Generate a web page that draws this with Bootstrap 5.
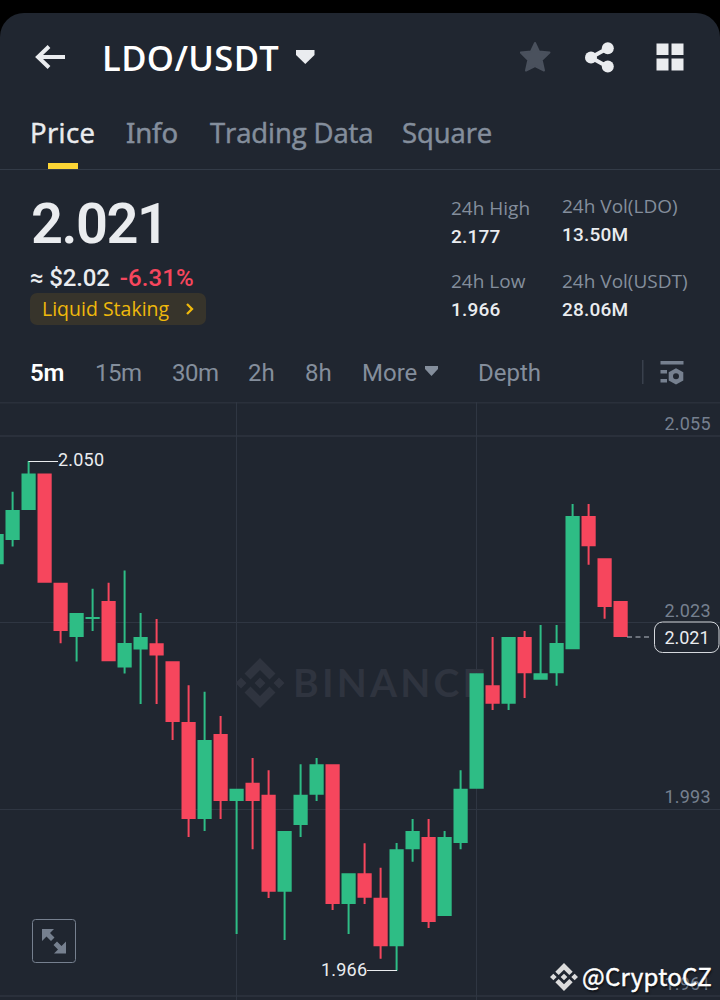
<!DOCTYPE html>
<html lang="en">
<head>
<meta charset="utf-8">
<meta name="viewport" content="width=device-width, initial-scale=1">
<title>LDO/USDT</title>
<link href="https://cdn.jsdelivr.net/npm/bootstrap@5.3.0/dist/css/bootstrap.min.css" rel="stylesheet">
<style>
body{background:#000;font-family:"Open Sans","Noto Sans",sans-serif;color:#eaecef;height:1000px;overflow:hidden}
.app{background:#202630;border-radius:24px 24px 0 0;margin-top:13px;height:987px;position:relative}
.topbar{height:88px;padding:0 35px}
.pair{font-size:34.5px;font-weight:600;color:#fff;line-height:44px;letter-spacing:.4px;margin-left:36px;padding-top:2px;width:194px;white-space:nowrap}
.tabs{display:grid;grid-template-columns:96px 84px 192px 1fr;height:69px;padding-left:30px;border-bottom:1px solid #333b47;font-size:27.5px;font-weight:400;-webkit-text-stroke:.5px;line-height:40px;padding-top:12px;color:#848e9c;white-space:nowrap;letter-spacing:-.1px}
.tabs a,.frames a{color:inherit;text-decoration:none}
.tabs .on{color:#eaecef;letter-spacing:.4px}
.bar{width:30px;height:6px;background:#fcd535;margin:10px 0 0 18px}
.num{font-family:Roboto,sans-serif}
.quote{height:172px;padding-left:30px}
.price{font-size:56px;font-weight:600;line-height:60px;margin:24px 0 0 1px;height:60px;letter-spacing:-1.5px}
.sub{font-size:24px;line-height:28px;margin-top:10px;font-weight:500;white-space:nowrap;letter-spacing:-.15px}
.down{color:#f6465d;letter-spacing:.1px}
.tagpill{background:#37342b;color:#f0b90b;border-radius:7px;width:176px;height:32px;font-size:19.5px;line-height:32px;padding:0 12px;margin-top:1px;white-space:nowrap}
.stats{width:269px;display:grid;grid-template-columns:111px 1fr;padding-top:24px}
.stats dl{margin:0 0 16px;height:56px;white-space:nowrap}
.stats dt{font-size:19px;font-weight:400;line-height:28px;color:#848e9c}
.stats dd{margin:1px 0 0;font-size:19px;font-weight:500;line-height:28px;letter-spacing:.2px}
.stats .lift{margin-top:-2px}
.frames{display:grid;grid-template-columns:65px 77px 76px 57px 57px 116px 164px 1fr;height:60px;padding-left:30px;font-size:24px;line-height:62px;color:#848e9c;white-space:nowrap}
.frames .on{color:#fff;font-weight:600;letter-spacing:-.3px}
.chart{display:block;width:720px;height:598px}
.chart text{font-family:Roboto,sans-serif;font-size:18px}
.credit{position:absolute;right:8px;bottom:6px;color:#fff;font:400 24px/36px "Noto Sans CJK SC",sans-serif;-webkit-text-stroke:.45px;letter-spacing:.25px;text-shadow:1px 2px 2px #0009}
.credit span{margin-top:-3px}
</style>
</head>
<body>
<main class="app">
  <header class="topbar d-flex align-items-center">
    <svg width="31" height="26" viewBox="0 0 31 26" fill="none" stroke="#eaecef" stroke-width="4"><path d="M14 2.500 3 13l11 10.500M3 13h27"/></svg>
    <div class="pair">LDO/USDT</div>
    <svg width="19" height="15" viewBox="0 0 19 15" fill="#eaecef"><path d="M0 0h18.500v5L9.300 14 0 5z"/></svg>
    <svg class="ms-auto" width="31" height="32" viewBox="0 0 31 32" fill="#4a515d" stroke="#4a515d" stroke-width="2" stroke-linejoin="round"><path d="m15 2 4 8.500 10.500 1-7.800 7.500 2.300 10.500-9-4.500-9 4.500 2.300-10.500L.8 11.500l10.200-1z"/></svg>
    <svg style="margin-left:34px" width="30" height="31" viewBox="0 0 30 31" fill="#eaecef"><path d="M6 15.500 23 6M6 15.500 23 25" stroke="#eaecef" stroke-width="4"/><circle cx="6" cy="15.500" r="6"/><circle cx="22.800" cy="6.200" r="6"/><circle cx="22.800" cy="24.500" r="6"/></svg>
    <svg style="margin-left:41px" width="29" height="28" viewBox="0 0 29 28" fill="#eaecef"><path d="M.5.500h12v11.500h-12zM15.500.500h12v11.500h-12zM.5 15.500h12v12h-12zM15.500 15.500h12v12h-12z"/></svg>
  </header>
  <nav class="tabs">
    <a class="on" href="#">Price<div class="bar"></div></a><a href="#" style="font-family:'Noto Sans'">Info</a><a href="#">Trading Data</a><a href="#">Square</a>
  </nav>
  <section class="quote d-flex justify-content-between">
    <div>
      <div class="price num">2.021</div>
      <div class="sub num">≈ $2.02 <span class="down ms-1">-6.31%</span></div>
      <div class="tagpill d-flex align-items-center justify-content-between">Liquid Staking <svg width="8" height="12" viewBox="0 0 8 12" fill="none" stroke="#f0b90b" stroke-width="2.300"><path d="m1 1 5 5-5 5"/></svg></div>
    </div>
    <div class="stats">
      <dl><dt>24h High</dt><dd class="num">2.177</dd></dl><dl class="lift"><dt>24h Vol(LDO)</dt><dd class="num">13.50M</dd></dl>
      <dl class="lift"><dt>24h Low</dt><dd class="num">1.966</dd></dl><dl class="lift"><dt>24h Vol(USDT)</dt><dd class="num">28.06M</dd></dl>
    </div>
  </section>
  <nav class="frames num">
    <a class="on" href="#">5m</a><a href="#" style="letter-spacing:-.5px">15m</a><a href="#" style="letter-spacing:-.5px">30m</a><a href="#">2h</a><a href="#">8h</a>
    <a href="#">More <svg width="13" height="10" viewBox="0 0 13 10" fill="#848e9c" style="margin:-8px 0 0 2px"><path d="M0 0h13v3L6.500 10 0 3z"/></svg></a>
    <a href="#">Depth</a>
    <div class="d-flex align-items-center"><svg width="42" height="26" viewBox="0 0 42 26" fill="#76808f" style="margin-top:-2px"><path fill="#39404c" d="M0 1h1.500v24H0z"/><path d="M18.500 2h23v3.500h-23zM18.500 11H25v3.500h-6.500zM18.500 20H25v3.500h-6.500z"/><path fill-rule="evenodd" d="m34 9.300 7.300 4v8.200l-7.300 4-7.300-4v-8.200zm0 5a3 3 0 1 0 0 6 3 3 0 0 0 0-6z"/></svg></div>
  </nav>
  <svg class="chart" viewBox="0 402 720 598">
    <g stroke="#2f3642"><path d="M0 402.500H720M0 436H720M0 996H720" stroke="#2a303b" stroke-width="2"/><path d="M0 622.500H720M0 809.500H720M236.500 402V1000M476.500 402V1000"/></g>
    <g fill="#2f343f"><path d="m260 658 15.500 15.500-6 6L260 670l-9.500 9.500-6-6zM260 708l15.500-15.500-6-6L260 696l-9.500-9.500-6 6zM260 677.500l5.500 5.500-5.500 5.500-5.500-5.500zM241 677.500l5.500 5.500-5.500 5.500-5.500-5.500zM279 677.500l5.500 5.500-5.500 5.500-5.500-5.500z"/>
    <text x="293" y="697" textLength="192" style="font:700 39px Lato,sans-serif">BINANCE</text></g>
    <g id="candles"></g>
    <path d="M28.500 461.500H58M367 970.500h30" stroke="#eaecef"/>
    <g fill="#eaecef"><text x="58" y="466" textLength="46">2.050</text><text x="321" y="976" textLength="46">1.966</text></g>
    <g fill="#76808f"><text x="664.500" y="430" textLength="46">2.055</text><text x="664.500" y="617" textLength="46">2.023</text><text x="664.500" y="803" textLength="46">1.993</text><text x="664.500" y="990" textLength="46">1.961</text></g>
    <path d="M627 637h22" stroke="#b7bdc6" stroke-dasharray="5 3.500"/>
    <rect x="654.500" y="622" width="64.500" height="30.500" rx="8" fill="#202630" stroke="#d5d8dd"/>
    <text x="664.500" y="644" textLength="45" fill="#eaecef">2.021</text>
    <rect x="32.500" y="919.500" width="43" height="43" rx="3" fill="none" stroke="#76808f"/>
    <path fill="#76808f" d="M42 929h12l-4 4 4.500 4.500-3.500 3.500-4.500-4.500L42 941zM66 953.500H54l4-4-4.500-4.500 3.500-3.500 4.500 4.500 4.500-4.500z"/>
  </svg>
  <div class="credit d-flex align-items-center"><svg width="28" height="28" viewBox="0 0 50 50" fill="#dcdcdc" style="margin:-1px 4px 0 0"><path d="m25 0 15.500 15.500-6 6L25 12l-9.500 9.500-6-6zM25 50l15.500-15.500-6-6L25 38l-9.500-9.500-6 6zM25 19l6 6-6 6-6-6zM6 19l6 6-6 6-6-6zM44 19l6 6-6 6-6-6z"/></svg><span>@CryptoCZ</span></div>
</main>
<script src="https://cdn.jsdelivr.net/npm/bootstrap@5.3.0/dist/js/bootstrap.bundle.min.js"></script>
<script>
// Each candle: direction, wick top, body top, body bottom, wick bottom
const data = `g 534 534 564.3 564.3
g 491.7 510 540 546.5
g 461 473.5 510 510
r 473.5 473.5 582.7 582.7
r 582.7 582.7 631 643.3
g 613 613 637 661.5
g 588.7 617 619 631
r 582.7 601 661.3 661.3
g 570.5 643 667.5 673.5
g 613 637 649.5 704
r 619 643.3 655.5 704
r 661.3 661.3 722 740
r 685.3 722 819 837
g 691.7 740 819 831
r 716 734 801 819
g 788.7 788.7 801 934
r 758 782.7 801 849.3
r 770.3 794.7 891.7 898
g 831 831 891.7 940
g 764.3 794.7 825 837
g 758 764.3 794.7 801
r 764.3 764.3 904 910
g 873.3 873.3 904 934
r 843.3 873.3 897.7 904
r 867.7 897.7 946.3 958.7
g 843 849.3 946.3 970.7
g 819 831 849.3 861.7
r 819 837 922 928
g 831 837 916 916
g 770.3 788.7 843 849.3
g 673.3 673.3 788.7 788.7
r 637 685.3 703.7 710
g 637 637 703.7 710
r 631 637 673.3 698
g 625 673.3 679.7 679.7
g 625 643 673.3 685.7
g 504 516 649.3 649.3
r 504 516 546.3 564.7
r 558.3 558.3 607 618.7
r 601 601 637 637`.split("\n").map(l => l.trim().split(" "));
document.getElementById("candles").innerHTML = data.map(([c, t, a, b, w], i) => {
  const x = 16 * i - 3.4, f = c === "g" ? "#2ebd85" : "#f6465d";
  return `<path fill="${f}" d="M${x - 1} ${t}h2V${w}h-2zM${x - 7.1} ${a}h14.200V${b}h-14.200z"/>`;
}).join("");
</script>
</body>
</html>
